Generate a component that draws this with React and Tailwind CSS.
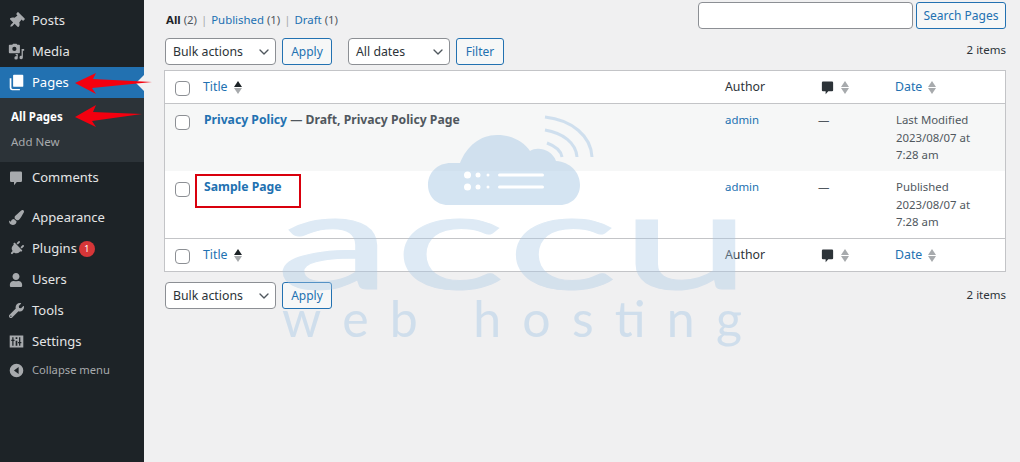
import { FaThumbtack, FaPlug, FaUser, FaWrench, FaPaintBrush } from 'react-icons/fa'
import { ChevronDown } from 'lucide-react'

const FONT = { fontFamily: '"Noto Sans", sans-serif' }

function PagesIcon({ className }) {
  return (
    <svg viewBox="0 0 20 20" className={className} fill="currentColor">
      <path d="M7 1h10a1 1 0 0 1 1 1v12a1 1 0 0 1-1 1H7a1 1 0 0 1-1-1V2a1 1 0 0 1 1-1z" />
      <path d="M4 5v11a1.500 1.500 0 0 0 1.500 1.500H14V19H5a3 3 0 0 1-3-3V5z" />
    </svg>
  )
}

function MediaIcon({ className }) {
  return (
    <svg viewBox="0 0 20 20" className={className} fill="currentColor">
      <path d="M2 2h3l1-1h4l1 1h2a1 1 0 0 1 1 1v8a1 1 0 0 1-1 1H2a1 1 0 0 1-1-1V3a1 1 0 0 1 1-1zm5.500 2.500a2.500 2.500 0 1 0 0 5 2.500 2.500 0 0 0 0-5z" fillRule="evenodd" />
      <path d="M16 7h3v2h-1.500v8a2 2 0 1 1-1.500-1.900zM9 13h2.500v4.500a2 2 0 1 1-1.500-1.900V14H9z" />
    </svg>
  )
}

function CommentIcon({ className }) {
  return (
    <svg viewBox="0 0 20 20" className={className} fill="currentColor">
      <path d="M4 2h12a1.500 1.500 0 0 1 1.500 1.500v10A1.500 1.500 0 0 1 16 15h-5l-3.500 4v-4H4a1.500 1.500 0 0 1-1.500-1.500v-10A1.500 1.500 0 0 1 4 2z" />
    </svg>
  )
}

function SettingsIcon({ className }) {
  return (
    <svg viewBox="0 0 20 20" className={className} fill="currentColor">
      <path fillRule="evenodd" d="M2 3h16v14H2zm3 2v3H3.800v1.500H5V15h1.500V9.500h1.200V8H6.500V5zm8 0v5.500h-1.200V12H13v3h1.500v-3h1.200v-1.500h-1.200V5zM9 5v2h2V5zm0 4v6h2V9z" />
    </svg>
  )
}

function CollapseIcon({ className }) {
  return (
    <svg viewBox="0 0 20 20" className={className} fill="currentColor">
      <path fillRule="evenodd" d="M10 2a8 8 0 1 1 0 16 8 8 0 0 1 0-16zm2.500 4L7 10l5.500 4z" />
    </svg>
  )
}

function MenuItem({ icon: Icon, label, active, iconClass = 'w-[17px] h-[17px]', children }) {
  return (
    <div className={`h-[31px] flex items-center pl-[6px] relative ${active ? 'bg-[#2271b1] text-white' : 'text-[#e4e5e6]'}`}>
      <span className={`w-[20px] flex justify-center shrink-0 ${active ? 'text-white' : 'text-[#a7aaad]'}`}>
        <Icon className={iconClass} />
      </span>
      <span className="ml-[6px] text-[13px]">{label}</span>
      {children}
      {active && (
        <span className="absolute right-0 top-[8px] border-y-[8px] border-r-[8px] border-y-transparent border-r-[#f0f0f1]" />
      )}
    </div>
  )
}

function SelectBox({ label, width }) {
  return (
    <div className={`${width} h-[27px] flex items-center justify-between pl-[7px] pr-[3px] bg-white border border-[#8c8f94] rounded-[4px] text-[12.300px] text-[#2c3338]`}>
      <span className="pt-[1px]">{label}</span>
      <ChevronDown className="w-[16px] h-[16px] text-[#50575e]" strokeWidth={2} />
    </div>
  )
}

function SecondaryButton({ label, width }) {
  return (
    <button className={`${width} h-[27px] flex items-center justify-center bg-[#f6f7f7] border border-[#2271b1] rounded-[3px] text-[12px] text-[#2271b1]`}>
      {label}
    </button>
  )
}

function Checkbox() {
  return <span className="block w-[15px] h-[15px] bg-white border border-[#8c8f94] rounded-[4px]" />
}

function SortArrows({ up = 'border-b-[#a7aaad]' }) {
  return (
    <span className="inline-flex flex-col gap-[1px] ml-[6px]">
      <span className={`border-x-[4px] border-b-[6px] border-x-transparent ${up}`} />
      <span className="border-x-[4px] border-t-[6px] border-x-transparent border-t-[#a7aaad]" />
    </span>
  )
}

function HeaderRow({ border }) {
  return (
    <div className={`h-[33px] flex items-center text-[12.300px] ${border}`}>
      <div className="w-[38px] pl-[10px] pt-[2px] shrink-0"><Checkbox /></div>
      <div className="w-[522px] shrink-0 flex items-center text-[#2271b1]">
        Title <SortArrows up="border-b-[#1d2327]" />
      </div>
      <div className="w-[95px] shrink-0 text-[#2c3338]">Author</div>
      <div className="w-[75px] shrink-0 flex items-center">
        <CommentIcon className="w-[15px] h-[15px] text-[#2c3338]" />
        <SortArrows />
      </div>
      <div className="flex items-center text-[#2271b1]">Date <SortArrows /></div>
    </div>
  )
}

function PageRow({ title, state, status, bg }) {
  return (
    <div className={`h-[67px] flex pt-[7px] text-[11.400px] leading-[17.500px] ${bg}`}>
      <div className="w-[39px] pl-[10px] pt-[4px] shrink-0"><Checkbox /></div>
      <div className="w-[521px] shrink-0 text-[12.200px] font-bold text-[#50575e]">
        <span className="text-[#2271b1]">{title}</span>{state}
      </div>
      <div className="w-[93px] shrink-0 text-[#2271b1]">admin</div>
      <div className="w-[78px] shrink-0 text-[#50575e]">—</div>
      <div className="text-[#50575e]">
        <div>{status}</div>
        <div>2023/08/07 at</div>
        <div>7:28 am</div>
      </div>
    </div>
  )
}

function Watermark() {
  return (
    <svg viewBox="0 0 1020 462" className="absolute inset-0 w-[1020px] h-[462px] pointer-events-none">
      <path
        fill="#a9c9e6"
        opacity="0.5"
        d="M448 205C436 205 428 196 428 185C428 172 438 163 451 163L460 163C467 146 480 135 497 135C512 135 524 142 530 151C538 146 552 150 556 161C570 162 580 172 580 185C580 196 572 205 560 205Z"
      />
      <g fill="none" stroke="#a9c9e6" strokeWidth="3" opacity="0.5">
        <path d="M545 117C572 120 591 136 592 157" />
        <path d="M545 130C563 133 576 143 577 157" />
        <path d="M547 143C555 146 561 150 562 157" />
      </g>
      <g fill="#ffffff">
        <circle cx="467.500" cy="175" r="3.500" />
        <circle cx="478" cy="175" r="2.500" />
        <circle cx="488" cy="175" r="1.500" />
        <rect x="498" y="173.500" width="46" height="3" rx="1.500" />
        <circle cx="467.500" cy="187" r="3.500" />
        <circle cx="478" cy="187" r="2.500" />
        <circle cx="488" cy="187" r="1.500" />
        <rect x="498" y="185.500" width="46" height="3" rx="1.500" />
      </g>
      <text
        transform="translate(276 289) scale(1.72 1)"
        fontSize="135"
        textLength="276"
        lengthAdjust="spacing"
        fill="#a9c9e6"
        stroke="#a9c9e6"
        strokeWidth="1"
        opacity="0.38"
        style={{ fontFamily: 'Lato, sans-serif', fontWeight: 400 }}
      >
        accu
      </text>
      <text
        x="282"
        y="337"
        fill="#a9c9e6"
        opacity="0.45"
        fontSize="50"
        textLength="460"
        lengthAdjust="spacing"
        style={{ fontFamily: 'Lato, sans-serif', fontWeight: 400 }}
      >
        web hosting
      </text>
    </svg>
  )
}

function Arrows() {
  return (
    <svg viewBox="0 0 1020 462" className="absolute inset-0 w-[1020px] h-[462px] pointer-events-none" fill="#f4000f">
      <path d="M75 83L96 73L93 79L152 82L92 88L96 94Z" />
      <path d="M75 117L96 105L93 112L142 114L92 121L96 127Z" />
    </svg>
  )
}

export default function App() {
  return (
    <div className="relative flex w-[1020px] h-[462px] overflow-hidden bg-[#f0f0f1]" style={FONT}>
      <aside className="w-[144px] shrink-0 bg-[#1d2327] pt-[5px]">
        <MenuItem icon={FaThumbtack} label="Posts" iconClass="w-[16px] h-[16px] rotate-45" />
        <MenuItem icon={MediaIcon} label="Media" />
        <MenuItem icon={PagesIcon} label="Pages" active />
        <div className="h-[64px] bg-[#2c3338] pt-[9px] pl-[11px] text-[11.500px]">
          <div className="h-[20px] flex items-center font-bold text-white">All Pages</div>
          <div className="h-[26px] mt-[2px] flex items-center text-[#a7aaad]">Add New</div>
        </div>
        <MenuItem icon={CommentIcon} label="Comments" iconClass="w-[16px] h-[16px]" />
        <div className="h-[9px]" />
        <MenuItem icon={FaPaintBrush} label="Appearance" iconClass="w-[15px] h-[15px]" />
        <MenuItem icon={FaPlug} label="Plugins" iconClass="w-[15px] h-[15px] rotate-45">
          <span className="ml-[2px] w-[16px] h-[16px] rounded-full bg-[#d63638] text-white text-[9px] flex items-center justify-center">1</span>
        </MenuItem>
        <MenuItem icon={FaUser} label="Users" iconClass="w-[14px] h-[14px]" />
        <MenuItem icon={FaWrench} label="Tools" iconClass="w-[15px] h-[15px]" />
        <MenuItem icon={SettingsIcon} label="Settings" iconClass="w-[17px] h-[17px]" />
        <div className="h-[27px] flex items-center pl-[6px] text-[#a7aaad] text-[11.200px]">
          <span className="w-[20px] flex justify-center shrink-0"><CollapseIcon className="w-[17px] h-[17px]" /></span>
          <span className="ml-[6px]">Collapse menu</span>
        </div>
      </aside>

      <main className="flex-1 pl-[20px] pr-[14px] pt-[2px] text-[#50575e]">
        <div className="h-[27px] flex justify-between">
          <div className="pl-[2px] pt-[10px] text-[11.400px] leading-[16px]">
            <span className="font-bold text-[#1d2327]">All</span> (2) <span className="text-[#a7aaad] px-[1px]">|</span>{' '}
            <span className="text-[#2271b1]">Published</span> (1) <span className="text-[#a7aaad] px-[1px]">|</span>{' '}
            <span className="text-[#2271b1]">Draft</span> (1)
          </div>
          <div className="flex gap-[3px]">
            <input className="w-[215px] h-[27px] bg-white border border-[#8c8f94] rounded-[4px]" />
            <SecondaryButton label="Search Pages" width="w-[90px]" />
          </div>
        </div>

        <div className="mt-[9px] h-[27px] flex items-center pl-[1px]">
          <SelectBox label="Bulk actions" width="w-[111px]" />
          <span className="ml-[6px]"><SecondaryButton label="Apply" width="w-[50px]" /></span>
          <span className="ml-[16px]"><SelectBox label="All dates" width="w-[102px]" /></span>
          <span className="ml-[6px]"><SecondaryButton label="Filter" width="w-[48px]" /></span>
          <span className="ml-auto mb-[4px] text-[11.500px] text-[#2c3338]">2 items</span>
        </div>

        <div className="mt-[5px] bg-white border border-[#c3c4c7]">
          <HeaderRow border="border-b border-[#c3c4c7]" />
          <PageRow title="Privacy Policy" state=" — Draft, Privacy Policy Page" status="Last Modified" bg="bg-[#f6f7f7]" />
          <PageRow title="Sample Page" status="Published" bg="bg-white" />
          <HeaderRow border="border-t border-[#c3c4c7]" />
        </div>

        <div className="mt-[10px] h-[27px] flex items-center pl-[1px]">
          <SelectBox label="Bulk actions" width="w-[111px]" />
          <span className="ml-[6px]"><SecondaryButton label="Apply" width="w-[50px]" /></span>
          <span className="ml-auto mb-[2px] text-[11.500px] text-[#2c3338]">2 items</span>
        </div>
      </main>

      <Watermark />
      <Arrows />
      <div className="absolute left-[195px] top-[174px] w-[106px] h-[34px] border-2 border-[#d9000d]" />
    </div>
  )
}
